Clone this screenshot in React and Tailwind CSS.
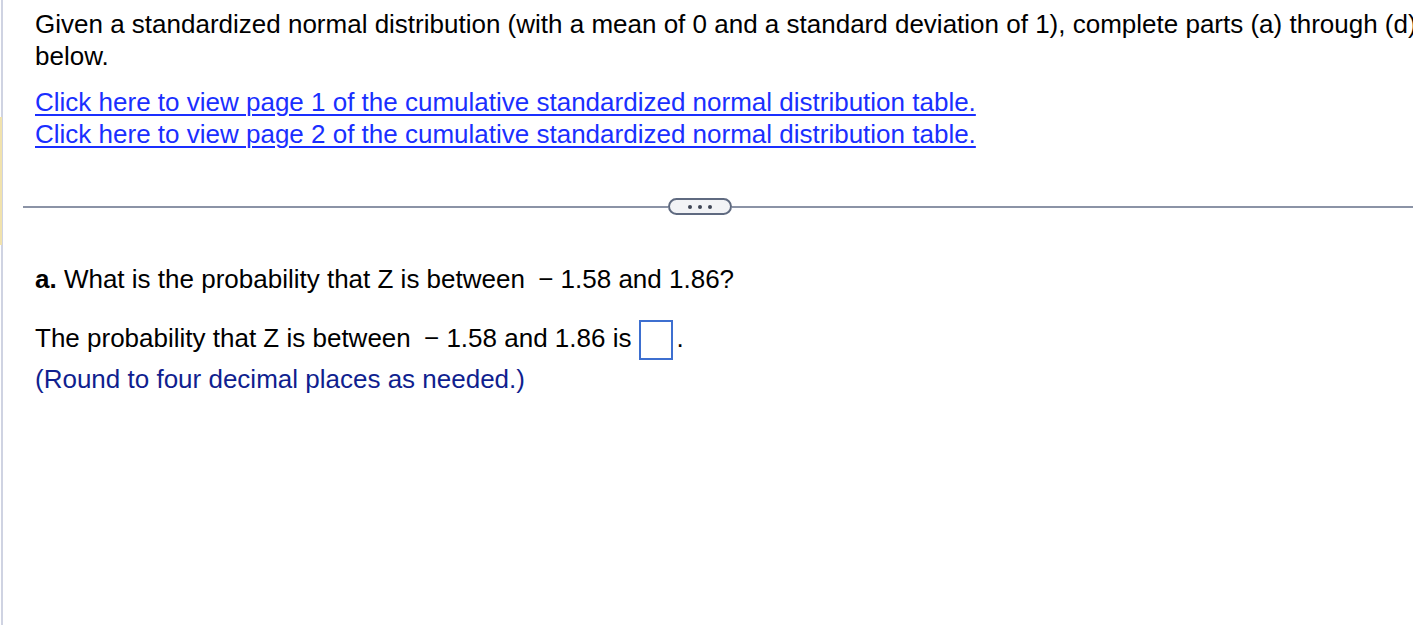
export default function App() {
  return (
    <div className="flex h-[625px] w-full overflow-hidden bg-white font-['Liberation_Sans',Arial,sans-serif] text-black">
      {/* left page edge */}
      <div className="relative w-[3px] shrink-0">
        <div className="ml-[1px] h-full w-[2px] bg-[#cfd3e2]" />
        <div className="absolute left-0 top-[117px] h-[128px] w-[2px] bg-[#f1e2ad]" />
      </div>

      <div className="min-w-0 flex-1">
        <div className="w-[1420px] pl-[32px] pt-[8px] text-[26px] leading-[32px]">
          <p className="w-[1395px]">
            Given a standardized normal distribution (with a mean of 0 and a standard deviation of 1), complete parts (a) through (d)
            below.
          </p>
          <div className="mt-[14px] text-[#1a2fff]">
            <p>
              <a href="#" className="underline underline-offset-[3px] decoration-[1.5px]">
                Click here to view page 1 of the cumulative standardized normal distribution table.
              </a>
            </p>
            <p>
              <a href="#" className="underline underline-offset-[3px] decoration-[1.5px]">
                Click here to view page 2 of the cumulative standardized normal distribution table.
              </a>
            </p>
          </div>
        </div>

        {/* divider */}
        <div className="mt-[48px] ml-[20px] flex items-center">
          <div className="h-[2px] w-[645px] bg-[#8b93a6]" />
          <div className="flex h-[17px] w-[64px] items-center justify-center gap-[6px] rounded-full border-2 border-[#5f6a80] bg-[#f2f3f6]">
            <span className="h-[4px] w-[4px] rounded-full bg-[#3f4656]" />
            <span className="h-[4px] w-[4px] rounded-full bg-[#3f4656]" />
            <span className="h-[4px] w-[4px] rounded-full bg-[#3f4656]" />
          </div>
          <div className="h-[2px] flex-1 bg-[#8b93a6]" />
        </div>

        <div className="pl-[32px] text-[26px] leading-[32px]">
          <p className="mt-[48px]">
            <span className="font-bold">a.</span> What is the probability that Z is between <span className="ml-[6px]">−</span> 1.58 and 1.86?
          </p>
          <p className="mt-[25px]">
            The probability that Z is between <span className="ml-[6px]">−</span> 1.58 and 1.86 is
            <span className="ml-[8px] inline-block h-[40px] w-[34px] border-2 border-[#3d6fd0] align-[-13px]" />
            <span className="ml-[3px]">.</span>
          </p>
          <p className="mt-[3px] text-[#101f8f]">(Round to four decimal places as needed.)</p>
        </div>
      </div>
    </div>
  );
}
